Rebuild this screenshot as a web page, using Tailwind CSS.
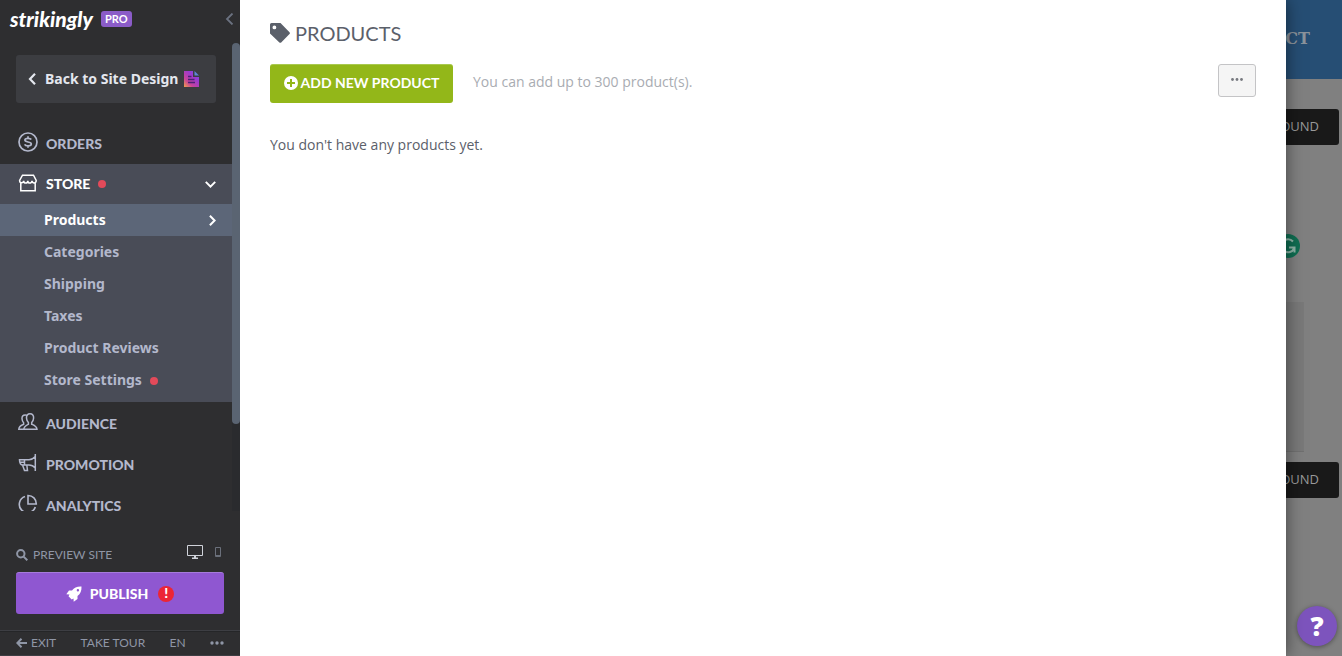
<!DOCTYPE html>
<html lang="en">

<head>
    <meta charset="UTF-8" />
    <meta name="viewport" content="width=device-width, initial-scale=1.0" />
    <title>Products</title>

    <script src="https://cdn.jsdelivr.net/npm/@tailwindcss/browser@4"></script>
</head>

<body class="flex h-screen overflow-hidden bg-[#808080] font-['Open_Sans',sans-serif] text-sm">

    <!-- Sidebar -->
    <aside class="z-20 flex w-60 shrink-0 flex-col bg-[#2e2e30] font-['Lato',sans-serif] text-[#b3b8cc]">
        <header class="flex h-[43px] shrink-0 items-start px-[10px] pt-[5px]">
            <a href="#" class="text-[21px] leading-[28px] font-black italic text-white">strikingly</a>
            <span class="mt-[6px] ml-2 rounded-[3px] bg-[#8b5cc8] px-[4px] text-[11px] leading-[16px] font-bold text-white">PRO</span>
            <button aria-label="Collapse sidebar" class="mt-[8px] -mr-[6px] ml-auto text-[#6b7280]">
                <svg class="h-3 w-3" viewBox="0 0 12 12" fill="none" stroke="currentColor" stroke-width="1.800"><path d="M8.500 .5 3 6l5.500 5.500" /></svg>
            </button>
        </header>

        <div class="flex min-h-0 flex-1 overflow-hidden">
            <div class="flex-1">
                <a href="#" class="mx-4 mt-3 mb-5 flex h-12 items-center rounded-[3px] bg-[#3c3d41] px-3 font-['Noto_Sans',sans-serif] font-bold text-[#e4e7ee]">
                    <svg class="mr-2 h-3 w-[9px]" viewBox="0 0 9 12" fill="none" stroke="currentColor" stroke-width="2.200"><path d="M7 .8 2 6l5 5.200" /></svg>
                    <span class="whitespace-nowrap">Back to Site Design</span>
                    <svg class="ml-[6px] h-4 w-[15px] shrink-0" viewBox="0 0 15 16">
                        <defs>
                            <linearGradient id="doc" x1="0" y1="1" x2="1" y2="0">
                                <stop offset="0" stop-color="#f0a04a" />
                                <stop offset=".3" stop-color="#c8439a" />
                                <stop offset=".65" stop-color="#9a3ad0" />
                                <stop offset="1" stop-color="#6f5bea" />
                            </linearGradient>
                        </defs>
                        <path d="M0 0h9v6h6v10H0z" fill="url(#doc)" />
                        <path d="M10.500 0 15 4.500h-4.500z" fill="#5e86d6" />
                        <path d="M4 5.500h3.500M4 8.500h6.500M4 11.500h7" stroke="#4b2275" stroke-width="1.500" />
                    </svg>
                </a>

                <nav>
                    <a href="#" class="flex h-[41px] items-center gap-2 pl-[18px] text-sm font-black">
                        <svg class="mb-[3px] size-5" viewBox="0 0 20 20" fill="none" stroke="currentColor" stroke-width="1.700">
                            <circle cx="10" cy="10" r="9" />
                            <path d="M13.300 7.500c-.5-.8-1.700-1.200-3.300-1.200-2 0-3.100.6-3.100 1.800s1.200 1.600 3.100 1.900 3.300.7 3.300 1.900-1.300 1.900-3.300 1.900c-1.700 0-2.900-.4-3.400-1.400M10 4.200v2M10 13.800v2" />
                        </svg>
                        ORDERS
                    </a>

                    <div class="bg-[#494c57] pb-[6px]">
                        <button aria-expanded="true" class="flex h-10 w-full items-center gap-2 pr-4 pl-[18px] text-sm font-black text-white">
                            <svg class="mb-[3px] size-5" viewBox="0 0 20 20" fill="none" stroke="currentColor" stroke-width="1.500">
                                <path d="M4.500 2.200h11l2.700 5.300c0 3.200-3.800 3.200-4.200.3-.4 2.900-3.900 2.900-4.200 0-.3 2.900-3.800 2.900-4.100 0-.5 2.900-4.100 2.600-4.100-.3zM2.800 10v7.800h14.400V10" />
                            </svg>
                            STORE
                            <span class="size-2 rounded-full bg-[#e34a5a]"></span>
                            <svg class="ml-auto h-[7px] w-[11px]" viewBox="0 0 11 7" fill="none" stroke="currentColor" stroke-width="2"><path d="m.8 .9 4.700 4.700L10.200 .9" /></svg>
                        </button>
                        <div class="font-['Noto_Sans',sans-serif] text-sm font-bold">
                            <a href="#" class="flex h-8 items-center bg-[#5c6678] pr-4 pl-11 text-white">
                                Products
                                <svg class="ml-auto h-[11px] w-[7px]" viewBox="0 0 7 11" fill="none" stroke="currentColor" stroke-width="2"><path d="m.9 .8 4.700 4.700L.9 10.200" /></svg>
                            </a>
                            <a href="#" class="flex h-8 items-center pl-11">Categories</a>
                            <a href="#" class="flex h-8 items-center pl-11">Shipping</a>
                            <a href="#" class="flex h-8 items-center pl-11">Taxes</a>
                            <a href="#" class="flex h-8 items-center pl-11">Product Reviews</a>
                            <a href="#" class="flex h-8 items-center gap-2 pl-11">
                                Store Settings
                                <span class="mt-[2px] size-2 rounded-full bg-[#e34a5a]"></span>
                            </a>
                        </div>
                    </div>

                    <a href="#" class="mt-px flex h-[41px] items-center gap-2 pl-[18px] text-sm font-black">
                        <svg class="mb-[3px] size-5" viewBox="0 0 20 20" fill="none" stroke="currentColor" stroke-width="1.500">
                            <path d="M12 1.800c2.600 0 3.700 1.700 3.600 4.200-.1 2-.9 3.600-1.900 4.500v1.700c2.600 1.100 5 1.900 5.300 5H5.800c.2-3.100 2.200-3.900 4.600-5v-1.700c-1-.9-1.800-2.500-1.900-4.500-.1-2.500 1-4.200 3.500-4.200z" />
                            <path d="M9 3.500C8.500 3 7.900 2.900 7.200 2.900c-2.300 0-3.300 1.600-3.200 3.900.1 1.800.7 3.100 1.600 4v1.600C3 13.500 1 14.200.8 17.200h5" />
                        </svg>
                        AUDIENCE
                    </a>
                    <a href="#" class="flex h-[41px] items-center gap-2 pl-[18px] text-sm font-black">
                        <svg class="mb-[3px] size-5" viewBox="0 0 20 20" fill="none" stroke="currentColor" stroke-width="1.500">
                            <path d="M17.300 1v17M17.300 3.500C15 6 13 6.700 11 6.700H1.500C1.500 10 3 12 5 12h6c2 0 4.500 1 6.300 3M6.500 6.700V12M1.500 9.300h5M4.500 12l2 5.500h3L8.800 12" />
                        </svg>
                        PROMOTION
                    </a>
                    <a href="#" class="flex h-[41px] items-center gap-2 pl-[18px] text-sm font-black">
                        <svg class="mb-[3px] size-5" viewBox="0 0 20 20" fill="none" stroke="currentColor" stroke-width="1.600">
                            <path d="M10 1.500V10h8.300C18.300 5 14.800 1.500 10 1.500z" />
                            <path d="M7 2.600A8.200 8.200 0 1 0 17.300 13" />
                        </svg>
                        ANALYTICS
                    </a>
                </nav>
            </div>
            <div class="w-2 bg-[#2a2b2e]">
                <div class="h-[381px] rounded-full bg-[#5a6472]"></div>
            </div>
        </div>

        <footer class="shrink-0 text-[#8f96a6]">
            <div class="flex h-[61px] items-end px-4 pb-2">
                <a href="#" class="flex items-center gap-[5px] text-xs leading-[18px]">
                    <svg class="size-3" viewBox="0 0 12 12" fill="none" stroke="currentColor" stroke-width="2"><circle cx="4.800" cy="4.800" r="3.700" /><path d="m7.600 7.600 3.700 3.700" /></svg>
                    PREVIEW SITE
                </a>
                <button aria-label="Desktop preview" class="mb-[5px] ml-auto text-[#d0d3da]">
                    <svg class="h-[14px] w-4" viewBox="0 0 16 14"><path d="M.5 .5h15v10H.5z" fill="none" stroke="currentColor" /><path d="M7 11h2v1.500h2V14H5v-1.500h2z" fill="currentColor" /></svg>
                </button>
                <button aria-label="Mobile preview" class="mr-[3px] mb-[7px] ml-3 text-[#6b707b]">
                    <svg class="h-[10px] w-[6px]" viewBox="0 0 6 10"><path d="M.5 .5h5v9h-5z" fill="none" stroke="currentColor" /><path d="M1 8h4v1.500H1z" fill="currentColor" /></svg>
                </button>
            </div>
            <button class="mx-4 mb-4 flex h-[42px] w-52 items-center justify-center rounded-[3px] border-t border-[#a67bdc] bg-[#8f57d1] text-sm font-black text-white">
                <svg class="mr-2 size-4" viewBox="0 0 16 16" fill="currentColor"><path fill-rule="evenodd" d="M15.500.5C11 .3 8.200 1.500 6 4.500H3L.3 8.300l3.200.2-1 1.800 3.200 3.200 1.800-1 .2 3.300 3.800-2.800V10c3-2.200 4.200-5 4-9.500zM11.900 3a1.200 1.200 0 1 1 0 2.400 1.200 1.200 0 0 1 0-2.400z" /></svg>
                PUBLISH
                <span class="ml-[10px] size-4 rounded-full bg-[#ec2535] text-sm leading-[14px]">!</span>
            </button>
            <div class="flex h-[26px] items-center justify-between border-y border-[#3d3e43] px-4 text-xs shadow-[inset_0_1px_0_#252628]">
                <a href="#" class="flex items-center gap-1">
                    <svg class="h-[10px] w-[11px]" viewBox="0 0 11 10" fill="none" stroke="currentColor" stroke-width="2"><path d="M5.500 .7 1.300 5l4.200 4.300M1.500 5H11" /></svg>
                    EXIT
                </a>
                <a href="#">TAKE TOUR</a>
                <a href="#">EN</a>
                <button aria-label="More">
                    <svg class="h-1 w-[14px]" viewBox="0 0 14 4" fill="currentColor"><circle cx="2" cy="2" r="1.700" /><circle cx="7" cy="2" r="1.700" /><circle cx="12" cy="2" r="1.700" /></svg>
                </button>
            </div>
        </footer>
    </aside>

    <!-- Products panel -->
    <main class="z-10 min-w-0 flex-1 bg-white px-[30px] text-[#5b606a] shadow-[0_0_16px_rgba(0,0,0,0.5)]">
        <h1 class="flex h-16 items-center gap-[5px] pt-[2px] font-['Lato',sans-serif] text-xl">
            <svg class="size-5" viewBox="0 0 20 20" fill="currentColor"><path fill-rule="evenodd" d="M1.500 0H10.500L19.500 9.300q.8.900 0 1.800L11.200 19.400q-.9.800-1.800 0L0 10.500V1.500Q0 0 1.500 0zM4.400 2.500a1.900 1.900 0 1 0 0 3.800 1.900 1.900 0 0 0 0-3.800z" /></svg>
            PRODUCTS
        </h1>
        <div class="flex items-start">
            <button class="flex h-[39px] w-[183px] items-center justify-center gap-[3px] rounded-[3px] border-t border-[#a9c94f] bg-[#93b719] pb-[2px] font-['Lato',sans-serif] text-sm font-bold whitespace-nowrap text-white">
                <svg class="size-[14px]" viewBox="0 0 14 14"><circle cx="7" cy="7" r="7" fill="currentColor" /><path d="M7 3v8M3 7h8" stroke="#93b719" stroke-width="2" /></svg>
                ADD NEW PRODUCT
            </button>
            <p class="ml-5 leading-9 text-[#a9acb2]">You can add up to 300 product(s).</p>
            <button aria-label="More options" class="ml-auto flex h-[33px] w-[38px] items-center justify-center rounded-[3px] border border-[#c4c4c6] bg-[#f5f5f5] text-[#77797f]">
                <svg class="mb-[2px] h-[3px] w-3" viewBox="0 0 12 3" fill="currentColor"><circle cx="1.500" cy="1.500" r="1.400" /><circle cx="6" cy="1.500" r="1.400" /><circle cx="10.500" cy="1.500" r="1.400" /></svg>
            </button>
        </div>
        <p class="mt-8 leading-5">You don't have any products yet.</p>
    </main>

    <!-- Dimmed site behind the panel -->
    <section class="relative flex w-14 shrink-0 flex-col items-end overflow-hidden font-['Open_Sans',sans-serif]">
        <div class="flex h-[79px] w-full shrink-0 items-center justify-end bg-[#264e74] pr-8 pb-[2px] font-['DejaVu_Serif',serif] text-base font-bold text-[#8b939b]">CONTACT</div>
        <button class="mt-[30px] mr-[3px] h-9 shrink-0 rounded-[3px] bg-[#191919] px-5 pb-[2px] text-[13px] text-[#999]">BACKGROUND</button>
        <svg class="mt-[89px] mr-[42px] size-6 shrink-0" viewBox="0 0 24 24" fill="none" stroke="#8fb5a8" stroke-width="2">
            <circle cx="12" cy="12" r="12" fill="#0f6e52" stroke="none" />
            <path d="M17 7.500A6.500 6.500 0 1 0 18 14.500M13 13.500h5.500v5" />
        </svg>
        <div class="mt-11 mr-[38px] h-[150px] w-40 shrink-0 border-b border-[#707070] bg-[#797979]"></div>
        <button class="mt-[10px] mr-[3px] h-9 shrink-0 rounded-[3px] bg-[#191919] px-5 pb-[2px] text-[13px] text-[#999]">BACKGROUND</button>
        <button aria-label="Help" class="mt-auto mr-[5px] mb-[10px] size-10 shrink-0 rounded-full bg-[#7d54bd] text-[26px] leading-10 font-extrabold text-white shadow-[0_1px_5px_rgba(0,0,0,0.4)]">?</button>
    </section>
</body>

</html>
